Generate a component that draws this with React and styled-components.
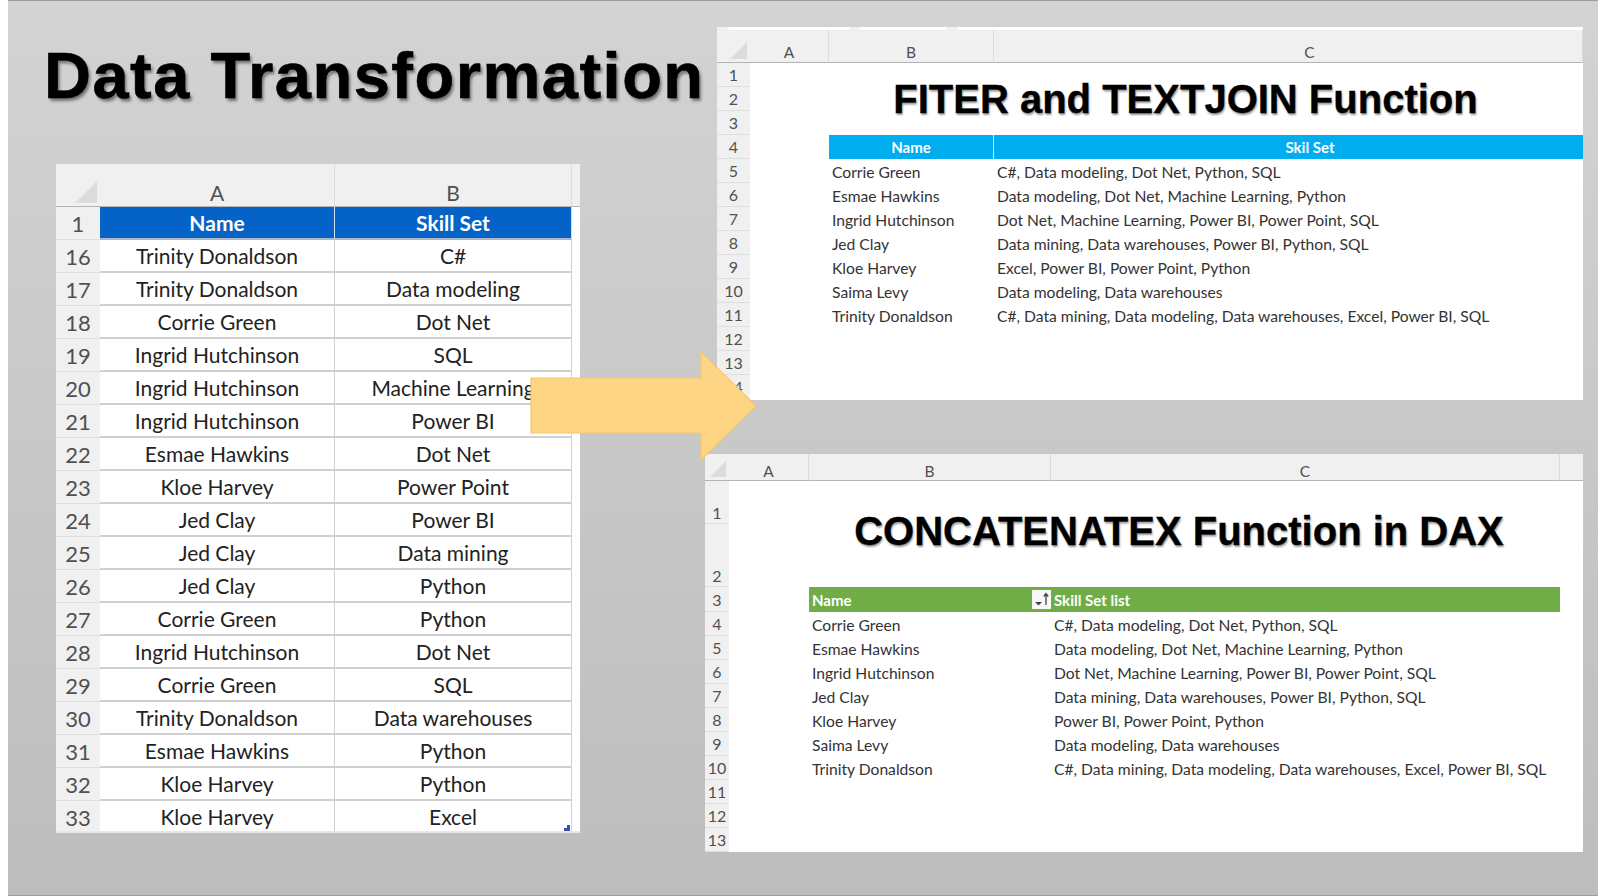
import styled, { createGlobalStyle } from "styled-components";

const GlobalStyle = createGlobalStyle`
  html, body {
    margin: 0;
    padding: 0;
    background: #fff;
  }
  #root {
    width: 1600px;
    height: 896px;
    overflow: hidden;
  }
`;

const Slide = styled.div`
  position: relative;
  display: flex;
  box-sizing: border-box;
  width: 1590px;
  height: 896px;
  margin-left: 8px;
  border-top: 1px solid #9c9c9c;
  border-bottom: 1px solid #9c9c9c;
  background: linear-gradient(180deg, #d3d3d3 0%, #bdbdbd 100%);
  font-family: Lato, "Open Sans", sans-serif;
`;

const LeftColumn = styled.div`
  width: 651px;
  margin-left: 48px;
  padding-top: 24px;
`;

const RightColumn = styled.div`
  display: flex;
  flex-direction: column;
  gap: 54px;
  width: 876px;
  padding-top: 26px;
`;

const MainTitle = styled.h1`
  margin: 0 0 38px -12px;
  height: 101px;
  font-family: "Liberation Sans", Arial, sans-serif;
  font-size: 65px;
  line-height: 101px;
  font-weight: 700;
  letter-spacing: 1.5px;
  color: #000;
  white-space: nowrap;
  text-shadow: 2px 3px 3px rgba(0, 0, 0, 0.45);
  -webkit-text-stroke: 0.6px #000;
`;

const Sheet = styled.div`
  position: relative;
  display: grid;
  grid-template-columns: ${(p) => p.$columns};
  grid-template-rows: ${(p) => p.$rows};
  width: ${(p) => p.$width}px;
  height: ${(p) => p.$height}px;
  margin-left: ${(p) => p.$offset || 0}px;
  overflow: hidden;
  background: #fff;
`;

const TabStrip = styled.div`
  grid-column: 1 / -1;
  display: flex;
  gap: 10px;
  padding-left: 11px;
  background: #f0f0f0;
`;

const Tab = styled.span`
  width: ${(p) => p.$width}px;
  flex: ${(p) => (p.$grow ? 1 : "none")};
  background: #fff;
  border-radius: 0 0 4px 4px;
`;

const CornerCell = styled.div`
  grid-column: 1;
  display: flex;
  align-items: flex-end;
  justify-content: flex-end;
  padding: 0 3px 3px 0;
  background: #f0f0f0;
  border-bottom: 1px solid #b4b4b4;

  &::after {
    content: "";
    width: ${(p) => p.$size}px;
    height: ${(p) => p.$size}px;
    background: #dcdcdc;
    clip-path: polygon(100% 0, 100% 100%, 0 100%);
  }
`;

const ColumnHead = styled.div`
  display: flex;
  align-items: center;
  justify-content: center;
  padding-top: ${(p) => p.$pad || 0}px;
  padding-left: ${(p) => p.$shift || 0}px;
  background: #f0f0f0;
  border-bottom: 1px solid #b4b4b4;
  border-right: 1px solid #dcdcdc;
  color: #505050;
  font-size: ${(p) => p.$size}px;
`;

const RowNumber = styled.div`
  grid-column: 1;
  display: flex;
  align-items: ${(p) => (p.$low ? "flex-end" : "center")};
  justify-content: center;
  padding-bottom: ${(p) => (p.$low ? 1 : 0)}px;
  background: #f0f0f0;
  border-bottom: 1px solid #dedede;
  color: #505050;
  font-size: ${(p) => p.$size}px;
`;

const Blank = styled.div`
  background: ${(p) => p.$fill || "#fff"};
  border-bottom: ${(p) => (p.$fill ? "1px solid #b4b4b4" : "none")};
`;

const SheetTitle = styled.div`
  grid-column: 2 / -1;
  grid-row: ${(p) => p.$rows};
  display: flex;
  align-items: center;
  justify-content: center;
  padding-left: ${(p) => p.$shift}px;
  padding-bottom: ${(p) => p.$lift || 0}px;
  font-family: "Liberation Sans", Arial, sans-serif;
  font-size: 40px;
  font-weight: 700;
  color: #000;
  white-space: nowrap;
  text-shadow: 1px 2px 2px rgba(0, 0, 0, 0.4);
  -webkit-text-stroke: 0.3px #000;
`;

const HeadCell = styled.div`
  position: relative;
  display: flex;
  align-items: center;
  justify-content: ${(p) => (p.$left ? "flex-start" : "center")};
  padding-left: ${(p) => p.$pad || 0}px;
  background: ${(p) => p.$color};
  border-right: ${(p) => (p.$divider ? "1px solid #d8eef8" : "none")};
  color: #fff;
  font-size: 15px;
  font-weight: 700;
`;

const DataCell = styled.div`
  display: flex;
  align-items: center;
  padding: 1px 0 0 3px;
  color: #333;
  font-size: 15.65px;
  white-space: nowrap;
`;

const FilterButton = styled.span`
  position: absolute;
  right: 0;
  top: 3px;
  display: flex;
  width: 19px;
  height: 19px;
  background: #f8f8f8;
`;

const ListHead = styled.div`
  display: flex;
  align-items: center;
  justify-content: center;
  background: #0563c8;
  border-right: 1px solid #cfe0f3;
  border-bottom: 2px solid #a9b7c6;
  color: #fff;
  font-size: 21px;
  font-weight: 700;
`;

const ListCell = styled.div`
  display: flex;
  align-items: center;
  justify-content: center;
  border-right: 1px solid #d0d0d0;
  border-bottom: 2px solid #d0d0d0;
  color: #222;
  font-size: 21px;
  white-space: nowrap;
`;

const SizeHandle = styled.span`
  position: absolute;
  right: 10px;
  bottom: 2px;
  width: 6px;
  height: 6px;
  background: #3f4fa8;
  clip-path: polygon(100% 0, 100% 100%, 0 100%, 0 50%, 50% 50%, 50% 0);
`;

const BottomEdge = styled.div`
  position: absolute;
  left: 0;
  right: 0;
  bottom: 0;
  height: 2px;
  background: #e8e8e8;
`;

const Arrow = styled.svg`
  position: absolute;
  left: 522px;
  top: 350px;
`;

const skillRows = [
  ["16", "Trinity Donaldson", "C#"],
  ["17", "Trinity Donaldson", "Data modeling"],
  ["18", "Corrie Green", "Dot Net"],
  ["19", "Ingrid Hutchinson", "SQL"],
  ["20", "Ingrid Hutchinson", "Machine Learning"],
  ["21", "Ingrid Hutchinson", "Power BI"],
  ["22", "Esmae Hawkins", "Dot Net"],
  ["23", "Kloe Harvey", "Power Point"],
  ["24", "Jed Clay", "Power BI"],
  ["25", "Jed Clay", "Data mining"],
  ["26", "Jed Clay", "Python"],
  ["27", "Corrie Green", "Python"],
  ["28", "Ingrid Hutchinson", "Dot Net"],
  ["29", "Corrie Green", "SQL"],
  ["30", "Trinity Donaldson", "Data warehouses"],
  ["31", "Esmae Hawkins", "Python"],
  ["32", "Kloe Harvey", "Python"],
  ["33", "Kloe Harvey", "Excel"],
];

const textJoinRows = [
  ["Corrie Green", "C#, Data modeling, Dot Net, Python, SQL"],
  ["Esmae Hawkins", "Data modeling, Dot Net, Machine Learning, Python"],
  ["Ingrid Hutchinson", "Dot Net, Machine Learning, Power BI, Power Point, SQL"],
  ["Jed Clay", "Data mining, Data warehouses, Power BI, Python, SQL"],
  ["Kloe Harvey", "Excel, Power BI, Power Point, Python"],
  ["Saima Levy", "Data modeling, Data warehouses"],
  ["Trinity Donaldson", "C#, Data mining, Data modeling, Data warehouses, Excel, Power BI, SQL"],
];

const daxRows = [
  ["Corrie Green", "C#, Data modeling, Dot Net, Python, SQL"],
  ["Esmae Hawkins", "Data modeling, Dot Net, Machine Learning, Python"],
  ["Ingrid Hutchinson", "Dot Net, Machine Learning, Power BI, Power Point, SQL"],
  ["Jed Clay", "Data mining, Data warehouses, Power BI, Python, SQL"],
  ["Kloe Harvey", "Power BI, Power Point, Python"],
  ["Saima Levy", "Data modeling, Data warehouses"],
  ["Trinity Donaldson", "C#, Data mining, Data modeling, Data warehouses, Excel, Power BI, SQL"],
];

const SkillSheet = () => (
  <Sheet
    $columns="44px 235px 237px 8px"
    $rows="43px repeat(19, 33px)"
    $width={524}
    $height={669}
  >
    <CornerCell $size={22} />
    <ColumnHead $size={21} $pad={15}>A</ColumnHead>
    <ColumnHead $size={21} $pad={15}>B</ColumnHead>
    <Blank $fill="#f0f0f0" />
    <RowNumber $size={22}>1</RowNumber>
    <ListHead>Name</ListHead>
    <ListHead>Skill Set</ListHead>
    <Blank />
    {skillRows.map(([num, name, skill]) => (
      <SkillRow key={num} num={num} name={name} skill={skill} />
    ))}
    <SizeHandle />
    <BottomEdge />
  </Sheet>
);

const SkillRow = ({ num, name, skill }) => (
  <>
    <RowNumber $size={22}>{num}</RowNumber>
    <ListCell>{name}</ListCell>
    <ListCell>{skill}</ListCell>
    <Blank />
  </>
);

const TextJoinSheet = () => (
  <Sheet
    $columns="33px 79px 165px 1fr"
    $rows="3px 33px repeat(14, 24px)"
    $width={866}
    $height={373}
    $offset={10}
  >
    <TabStrip>
      <Tab $width={122} />
      <Tab $width={87} />
      <Tab $grow />
    </TabStrip>
    <CornerCell $size={17} />
    <ColumnHead $size={15.5} $pad={12}>A</ColumnHead>
    <ColumnHead $size={15.5} $pad={12}>B</ColumnHead>
    <ColumnHead $size={15.5} $pad={12} $shift={43}>C</ColumnHead>
    <RowNumber $size={16}>1</RowNumber>
    <SheetTitle $rows="3 / span 3" $shift={38}>FITER and TEXTJOIN Function</SheetTitle>
    <RowNumber $size={16}>2</RowNumber>
    <RowNumber $size={16}>3</RowNumber>
    <RowNumber $size={16}>4</RowNumber>
    <Blank />
    <HeadCell $color="#00adef" $divider>Name</HeadCell>
    <HeadCell $color="#00adef" $pad={43}>Skil Set</HeadCell>
    {textJoinRows.map(([name, skills], i) => (
      <TextJoinRow key={name} num={i + 5} name={name} skills={skills} />
    ))}
    {[12, 13, 14].map((n) => (
      <RowNumber key={n} $size={16}>{n}</RowNumber>
    ))}
  </Sheet>
);

const TextJoinRow = ({ num, name, skills }) => (
  <>
    <RowNumber $size={16}>{num}</RowNumber>
    <Blank />
    <DataCell>{name}</DataCell>
    <DataCell>{skills}</DataCell>
  </>
);

const FilterIcon = () => (
  <svg width="19" height="19" viewBox="0 0 19 19">
    <path d="M3 12h7l-3.5 3.5z" fill="#444" />
    <path d="M14 15V4M11.8 6.5 14 3.5l2.2 3" stroke="#444" strokeWidth="1.3" fill="none" />
  </svg>
);

const DaxSheet = () => (
  <Sheet
    $columns="24px 80px 242px 509px 23px"
    $rows="27px 43px 63px 25px repeat(10, 24px)"
    $width={878}
    $height={398}
    $offset={-2}
  >
    <CornerCell $size={16} />
    <ColumnHead $size={15.5} $pad={8}>A</ColumnHead>
    <ColumnHead $size={15.5} $pad={8}>B</ColumnHead>
    <ColumnHead $size={15.5} $pad={8}>C</ColumnHead>
    <Blank $fill="#f0f0f0" />
    <RowNumber $size={16} $low>1</RowNumber>
    <SheetTitle $rows="2 / span 2" $shift={46} $lift={6}>CONCATENATEX Function in DAX</SheetTitle>
    <RowNumber $size={16} $low>2</RowNumber>
    <RowNumber $size={16}>3</RowNumber>
    <Blank />
    <HeadCell $color="#70ad47" $left $pad={3}>
      Name
      <FilterButton>
        <FilterIcon />
      </FilterButton>
    </HeadCell>
    <HeadCell $color="#70ad47" $left $pad={3}>Skill Set list</HeadCell>
    {daxRows.map(([name, skills], i) => (
      <TextJoinRow key={name} num={i + 4} name={name} skills={skills} />
    ))}
    {[11, 12, 13].map((n) => (
      <RowNumber key={n} $size={16}>{n}</RowNumber>
    ))}
  </Sheet>
);

const App = () => (
  <>
    <GlobalStyle />
    <Slide>
      <LeftColumn>
        <MainTitle>Data Transformation</MainTitle>
        <SkillSheet />
      </LeftColumn>
      <RightColumn>
        <TextJoinSheet />
        <DaxSheet />
      </RightColumn>
      <Arrow width="238" height="112" viewBox="0 0 238 112">
        <path d="M1 27H171V1L226 55 171 109V82H1z" fill="#fdd585" stroke="#f6c869" strokeWidth="1.2" />
      </Arrow>
    </Slide>
  </>
);

export default App;
